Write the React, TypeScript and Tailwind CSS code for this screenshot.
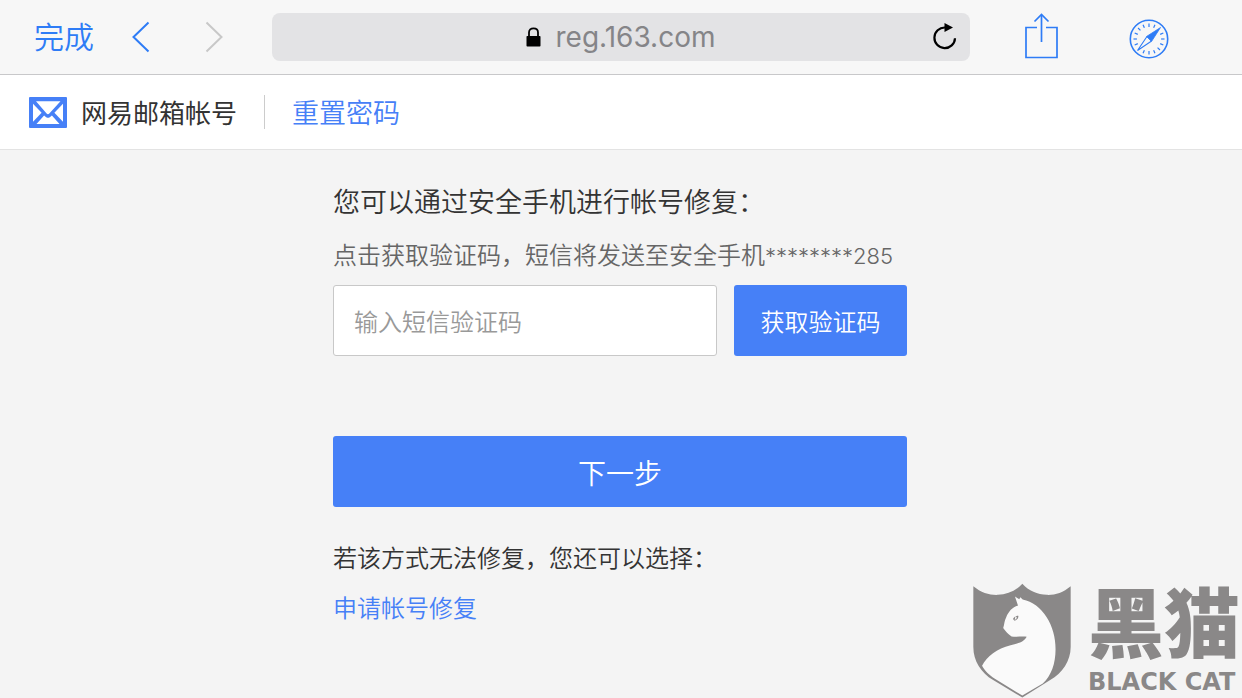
import React, { useState } from 'react';

const ticks = [0, 22.5, 67.5, 90, 112.5, 135, 157.5, 180, 202.5, 247.5, 270, 292.5, 315, 337.5];

function BackIcon() {
  return (
    <svg width="18" height="32" viewBox="0 0 18 32" fill="none" stroke="currentColor" strokeWidth="2">
      <path d="M16.5 1.5L1.5 16l15 14.5" />
    </svg>
  );
}

function ForwardIcon() {
  return (
    <svg width="18" height="32" viewBox="0 0 18 32" fill="none" stroke="currentColor" strokeWidth="2">
      <path d="M1.5 1.5L16.5 16l-15 14.5" />
    </svg>
  );
}

function LockIcon() {
  return (
    <svg width="15" height="20" viewBox="0 0 15 20" fill="none">
      <rect x="0.5" y="9" width="14" height="10.5" rx="0.8" fill="#000" />
      <path d="M3 10V5.5C3 3 4.8 1.3 7.5 1.3S12 3 12 5.5V10" stroke="#000" strokeWidth="1.8" />
    </svg>
  );
}

function ReloadIcon() {
  return (
    <svg width="24" height="28" viewBox="0 0 24 28" fill="none">
      <path d="M22 15.2A10.3 10.3 0 1 1 12 4.5" stroke="#000" strokeWidth="2.2" />
      <path d="M11.5 0v9l8.5-4.5z" fill="#000" />
    </svg>
  );
}

function ShareIcon() {
  return (
    <svg width="33" height="48" viewBox="0 0 33 48" fill="none" stroke="currentColor" strokeWidth="1.7">
      <path d="M12 14.5H1v30h31v-30H21" />
      <path d="M16.5 29V2" />
      <path d="M9.5 8.5l7-7 7 7" />
    </svg>
  );
}

function CompassIcon() {
  return (
    <svg width="40" height="43" viewBox="0 -3 40 43" fill="none" stroke="currentColor">
      <circle cx="20" cy="20" r="18.7" strokeWidth="1.6" />
      {ticks.map((angle) => (
        <path key={angle} d="M20 4.5v3.4" strokeWidth="1.2" transform={`rotate(${angle} 20 20)`} />
      ))}
      <path d="M31.5 8.5L22.5 22.5 17.5 17.5z" fill="currentColor" strokeWidth="0.8" />
      <path d="M17.8 17.8L8.5 31.5l13.7-9.3" strokeWidth="1.1" />
    </svg>
  );
}

function MailIcon() {
  return (
    <svg width="38" height="31" viewBox="0 0 38 31">
      <rect width="38" height="31" rx="1" fill="#4680f7" />
      <path d="M7 4.2h24.5L20.3 16.6c-.8.9-1.9.9-2.7 0z" fill="#fff" />
      <path d="M4 6.8l8.6 9L4 24.8z" fill="#fff" />
      <path d="M34 6.8l-8.6 9 8.6 9z" fill="#fff" />
      <path d="M7.5 27l7.6-8.5 2.1 1.7c1.2.8 2.4.8 3.6 0l2.1-1.7 7.6 8.5z" fill="#fff" />
    </svg>
  );
}

function Watermark() {
  return (
    <div className="pointer-events-none absolute right-0 bottom-0 flex items-end gap-[17px] pr-[2px] text-[#8a8888]">
      <svg width="98" height="115" viewBox="24 14 292 342">
        <path
          d="M25 23C48 42 74 50 98 49C126 48 152 37 171 16C190 37 216 48 244 49C268 50 292 42 315 23V204C315 246 290 281 254 303L171 355L84 303C48 280 25 246 25 204Z"
          fill="currentColor"
        />
        <path
          d="M149 54L162 62L165 56L172 63C201 69 226 88 243 115C261 143 270 176 270 211C270 254 257 290 232 313L171 349L88 298C73 288 58 274 51 260C66 232 95 209 136 199C158 194 174 191 184 174C169 172 153 176 139 173C130 168 120 157 114 148C118 137 117 127 123 116C130 98 141 87 158 81Z"
          fill="#fafafa"
        />
        <path d="M143 121C146 115 151 111 159 111C160 118 156 124 148 126Z" fill="currentColor" />
        <path d="M151 111L148 125L155 118Z" fill="#fafafa" />
      </svg>
      <div>
        <div className="font-['Liberation_Sans','Noto_Sans_CJK_SC',sans-serif] text-[76px] leading-[80px] font-black">
          黑猫
        </div>
        <div className="font-['DejaVu_Sans',sans-serif] text-[24px] leading-[32px] font-bold">BLACK CAT</div>
      </div>
    </div>
  );
}

function App() {
  const [code, setCode] = useState('');

  const handleSubmit = (e: React.FormEvent) => {
    e.preventDefault();
  };

  return (
    <div className="relative min-h-screen overflow-hidden bg-[#f4f4f4] font-['Noto_Sans_CJK_SC',sans-serif] font-[350] text-[#333]">
      <nav className="flex h-[75px] items-center border-b border-[#c8c8ca] bg-[#f7f7f7] pr-[73px] pl-[34px] text-[#2e7cf6]">
        <button className="pb-1 text-[30px] leading-9">完成</button>
        <button aria-label="后退" className="ml-[38px]">
          <BackIcon />
        </button>
        <button aria-label="前进" className="ml-[55px] text-[#c8c8c8]">
          <ForwardIcon />
        </button>
        <div className="ml-[49px] flex h-12 flex-1 items-center rounded-lg bg-[#e3e3e5] px-[13px]">
          <div className="w-6" />
          <button className="flex flex-1 items-center justify-center gap-[14px]">
            <LockIcon />
            <span className="font-['Inter',sans-serif] text-[28px] leading-9 font-normal text-[#858588]">reg.163.com</span>
          </button>
          <button aria-label="刷新">
            <ReloadIcon />
          </button>
        </div>
        <button aria-label="分享" className="ml-[55px]">
          <ShareIcon />
        </button>
        <button aria-label="浏览器" className="ml-[71px]">
          <CompassIcon />
        </button>
      </nav>

      <header className="flex h-[75px] items-center border-b border-[#e3e3e3] bg-white pl-[29px] text-[27px] leading-9">
        <MailIcon />
        <h1 className="ml-[14px] text-[26px] font-normal">网易邮箱帐号</h1>
        <div className="mx-[27px] h-[34px] w-px bg-[#ccc]" />
        <h2 className="text-[#4680f7]">重置密码</h2>
      </header>

      <main className="pr-[26px] pl-6 pt-[33px]">
        <form onSubmit={handleSubmit} className="mx-auto max-w-[574px] text-[24px] leading-9">
          <p className="text-[27px]">您可以通过安全手机进行帐号修复：</p>
          <label htmlFor="code" className="mt-[17px] block h-9 whitespace-nowrap text-[#666]">
            点击获取验证码，短信将发送至安全手机
            <span className="font-['Inter',sans-serif] text-[22px]">********285</span>
          </label>
          <div className="mt-[13px] flex gap-[17px]">
            <input
              id="code"
              type="text"
              value={code}
              onChange={(e) => setCode(e.target.value)}
              placeholder="输入短信验证码"
              className="h-[71px] min-w-0 flex-1 rounded-[3px] border border-[#c8c8c8] bg-white px-5 placeholder:text-[#999]"
            />
            <button type="button" className="h-[71px] w-[173px] rounded-[3px] bg-[#4680f7] text-white">
              获取验证码
            </button>
          </div>
          <button type="submit" className="mt-20 h-[71px] w-full rounded-[3px] bg-[#4680f7] text-[28px] text-white">
            下一步
          </button>
          <p className="mt-8">若该方式无法修复，您还可以选择：</p>
          <a href="#" className="mt-[14px] inline-block text-[#4680f7]">
            申请帐号修复
          </a>
        </form>
      </main>

      <Watermark />
    </div>
  );
}

export default App;
